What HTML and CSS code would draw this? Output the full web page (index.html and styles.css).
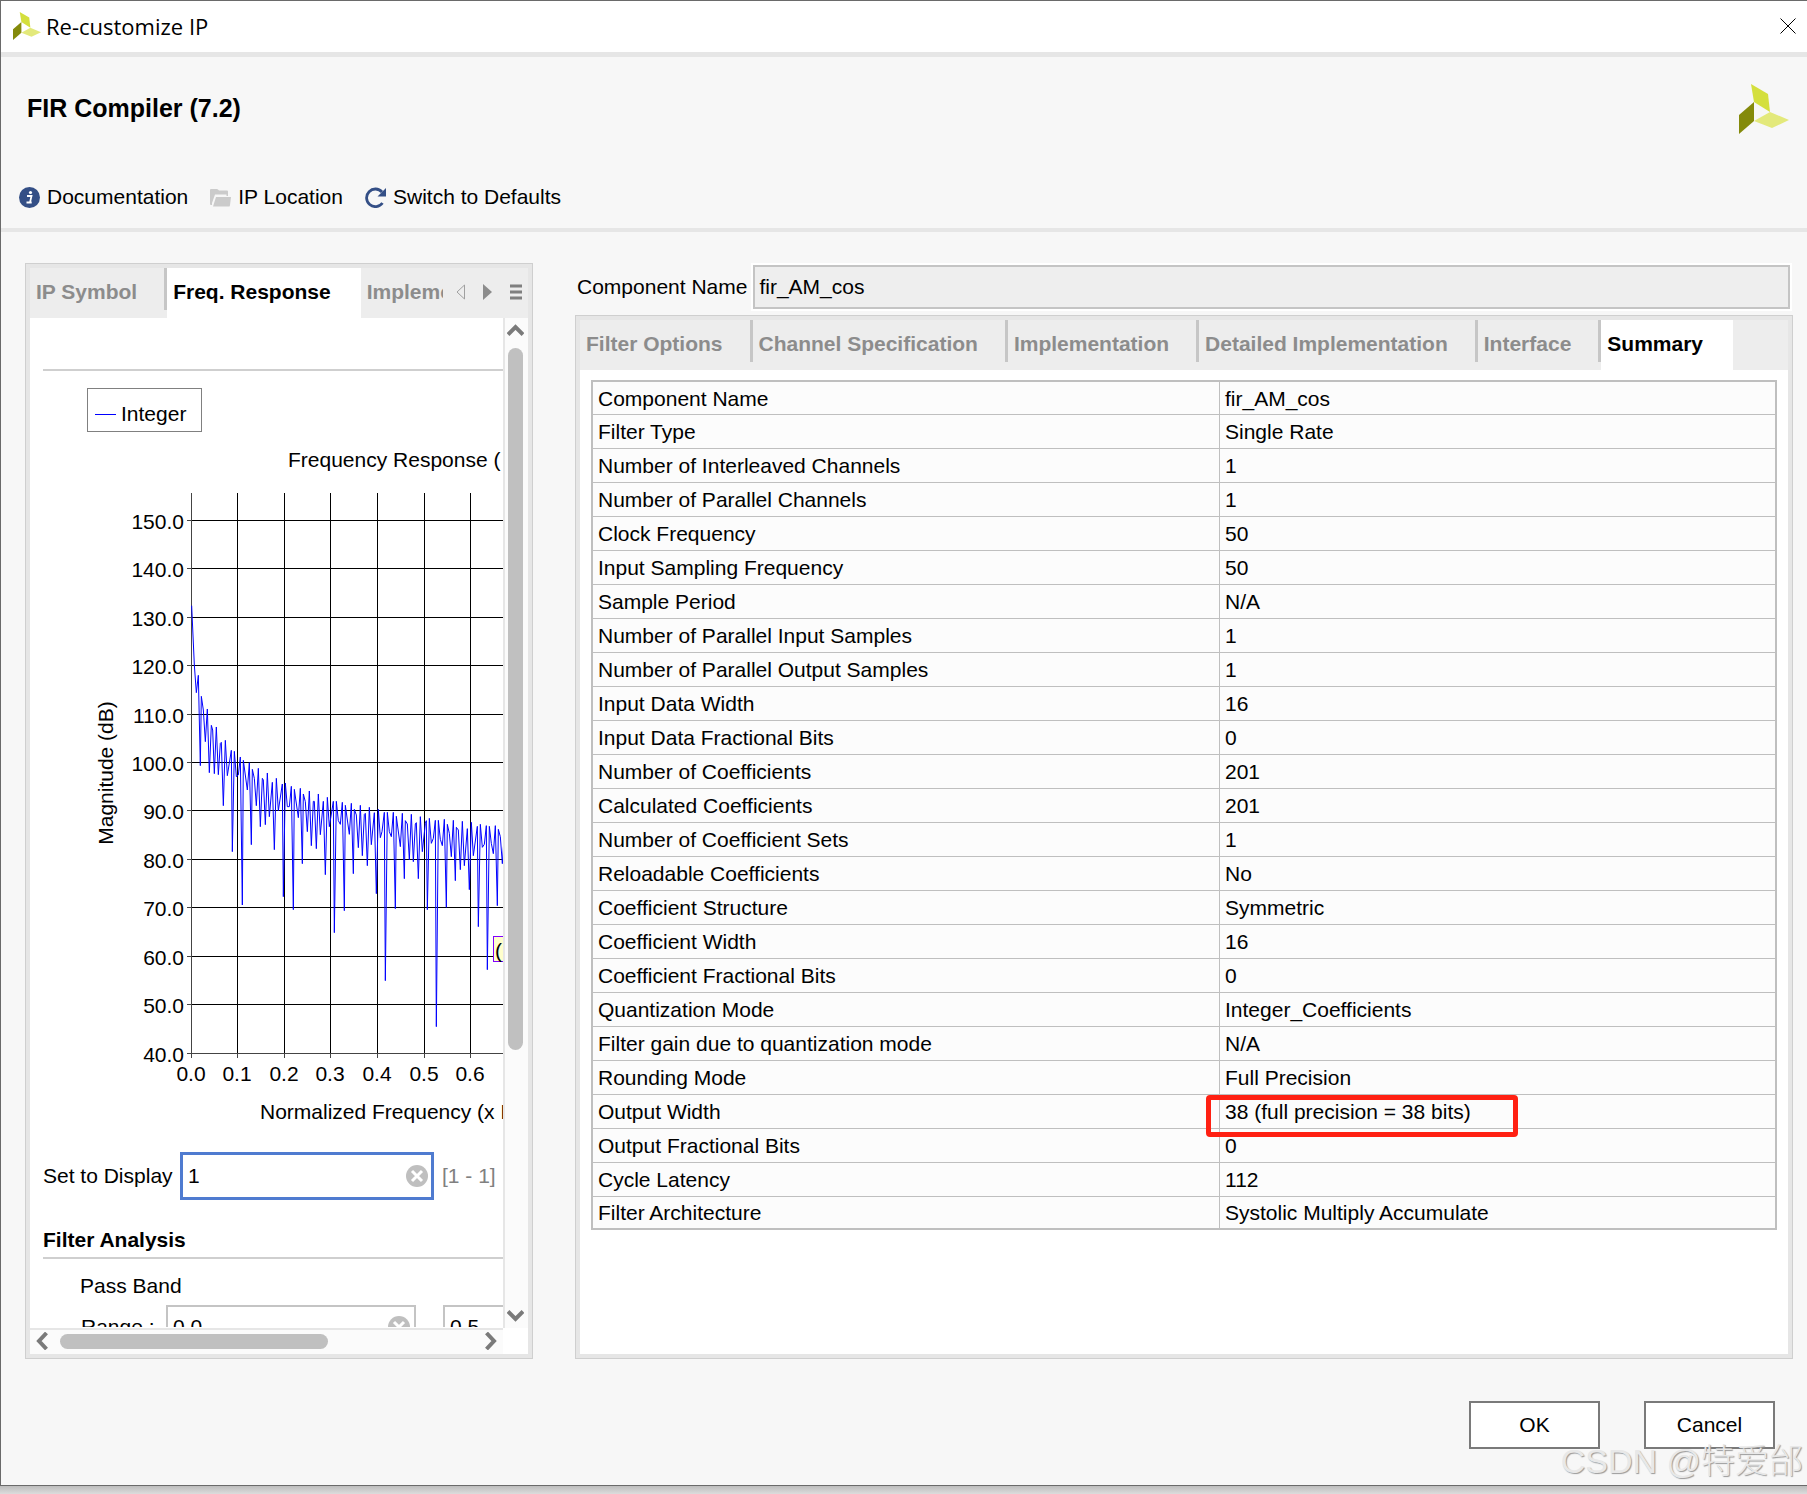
FILE: index.html
```
<!DOCTYPE html>
<html lang="en">
<head>
    <meta charset="UTF-8">
    <meta name="viewport" content="width=device-width, initial-scale=1.0">
    <title>Re-customize IP</title>
    <link rel="stylesheet" href="styles.css">
</head>
<body>
    <div class="dialog">
        <div class="titlebar">
            <svg class="title-logo" viewBox="0 0 50 50">
                <path fill="#d4df3d" d="M12 0 29 10 31 28 15 18z"/>
                <path fill="#848a0b" d="M0 31 15 18V37L0 50z"/>
                <path fill="#e3e97b" d="M15 37 31 28 50 36 33 44z"/>
            </svg>
            <span class="title-text">Re-customize IP</span>
            <button class="close" aria-label="Close">
                <svg viewBox="0 0 16 16" width="16" height="16"><path d="M0.5 0.5 15.5 15.5M15.5 0.5 0.5 15.5" stroke="#000" fill="none"/></svg>
            </button>
        </div>

        <header class="header">
            <div class="header-top">
                <h1>FIR Compiler (7.2)</h1>
                <svg class="logo" viewBox="0 0 50 50">
                    <path fill="#d4df3d" d="M12 0 29 10 31 28 15 18z"/>
                    <path fill="#848a0b" d="M0 31 15 18V37L0 50z"/>
                    <path fill="#e3e97b" d="M15 37 31 28 50 36 33 44z"/>
                </svg>
            </div>
            <div class="toolbar">
                <button class="tool">
                    <svg viewBox="0 0 21 21">
                        <circle cx="10.5" cy="10.5" r="10.5" fill="#344f86"/>
                        <circle cx="11.5" cy="5.5" r="1.6" fill="#fff"/>
                        <path d="M8 9h4.500l-1.500 6.500h1.700M7.500 15.500h4" stroke="#fff" stroke-width="1.800" fill="none"/>
                    </svg>
                    Documentation
                </button>
                <button class="tool">
                    <svg viewBox="0 0 21 21">
                        <path fill="#cbcbcb" d="M0 3q0-1 1-1h6q1 0 2 1.500h8q1 0 1 1V9h-1.500V7.500H5L2 16v2H1q-1 0-1-1z"/>
                        <path fill="#cbcbcb" d="M6 10h15l-1 8q0 1.500-1 1.500H3z"/>
                    </svg>
                    IP Location
                </button>
                <button class="tool">
                    <svg viewBox="0 0 21 21">
                        <path d="M17 5A8.800 8.800 0 1 0 17.500 16" stroke="#344f86" stroke-width="2.800" fill="none"/>
                        <path fill="#344f86" d="M21 1v8.500h-8.500z"/>
                    </svg>
                    Switch to Defaults
                </button>
            </div>
        </header>

        <main class="main">
            <section class="panel preview">
                <div class="tabs" role="tablist">
                    <button class="tab" role="tab">IP Symbol</button>
                    <button class="tab active" role="tab" aria-selected="true">Freq. Response</button>
                    <button class="tab tab-clipped" role="tab">Implementation Details</button>
                    <div class="tab-nav">
                        <button aria-label="Previous tab"><svg width="9" height="16" viewBox="0 0 9 16"><path d="M8.500 1v14L1 8z" fill="none" stroke="#a0a0a0"/></svg></button>
                        <button aria-label="Next tab"><svg width="9" height="16" viewBox="0 0 9 16"><path d="M0 0v16L9 8z" fill="#8c8c8c"/></svg></button>
                        <button aria-label="Tab list"><svg width="12" height="16" viewBox="0 0 12 16"><path d="M0 2h12M0 8h12M0 14h12" stroke="#7f7f7f" stroke-width="3"/></svg></button>
                    </div>
                </div>
                <div class="scroll-area">
                    <div class="viewport">
                        <div class="rule"></div>
                        <!-- Frequency response plot -->
                        <svg class="chart" viewBox="30 371 473 763" width="473" height="763">
                            <rect x="87.500" y="388.500" width="114" height="43" fill="#fff" stroke="#808080"/>
                            <path d="M95 414.500h21" stroke="#00f"/>
                            <text x="121" y="421">Integer</text>
                            <text x="288" y="467">Frequency Response (</text>
                            <path class="grid" d="M237.500 493v561M284.500 493v561M330.500 493v561M377.500 493v561M424.500 493v561M470.500 493v561M191 520.500h330M191 568.500h330M191 617.500h330M191 665.500h330M191 714.500h330M191 762.500h330M191 810.500h330M191 859.500h330M191 907.500h330M191 956.500h330M191 1004.500h330"/>
                            <path class="axis" d="M191.500 493v565M187 1053.500h330M187 520.500h4M187 568.500h4M187 617.500h4M187 665.500h4M187 714.500h4M187 762.500h4M187 810.500h4M187 859.500h4M187 907.500h4M187 956.500h4M187 1004.500h4M237.500 1054v4M284.500 1054v4M330.500 1054v4M377.500 1054v4M424.500 1054v4M470.500 1054v4"/>
                            <g text-anchor="end">
                                <text x="184" y="529">150.0</text>
                                <text x="184" y="577">140.0</text>
                                <text x="184" y="626">130.0</text>
                                <text x="184" y="674">120.0</text>
                                <text x="184" y="723">110.0</text>
                                <text x="184" y="771">100.0</text>
                                <text x="184" y="819">90.0</text>
                                <text x="184" y="868">80.0</text>
                                <text x="184" y="916">70.0</text>
                                <text x="184" y="965">60.0</text>
                                <text x="184" y="1013">50.0</text>
                                <text x="184" y="1062">40.0</text>
                            </g>
                            <g text-anchor="middle">
                                <text x="191" y="1081">0.0</text>
                                <text x="237" y="1081">0.1</text>
                                <text x="284" y="1081">0.2</text>
                                <text x="330" y="1081">0.3</text>
                                <text x="377" y="1081">0.4</text>
                                <text x="424" y="1081">0.5</text>
                                <text x="470" y="1081">0.6</text>
                                <text transform="rotate(-90 113 773)" x="113" y="773">Magnitude (dB)</text>
                            </g>
                            <text x="260" y="1119">Normalized Frequency (x PI rad/sample)</text>
                            <polyline class="response" transform="translate(80 470) scale(0.333333)" points="335,407 343,585 349,668 355,616 361,887 364,679 370,720 376,815 382,717 388,908 394,766 398,780 403,911 409,771 415,914 421,820 424,817 430,1007 436,811 442,917 454,841 457,1145 463,844 469,920 475,915 481,861 487,1305 490,871 502,960 508,878 514,1124 517,898 523,925 529,1007 535,895 541,1070 547,925 550,930 556,1064 562,909 568,1040 577,937 583,1139 589,925 595,1022 607,942 610,1280 616,939 622,1010 628,1010 634,949 640,1319 643,958 655,1043 661,955 667,1181 670,972 676,995 682,1085 688,963 694,1127 700,994 703,994 709,1136 715,972 721,1094 730,994 736,1214 742,982 748,1070 760,994 763,1388 769,994 775,1052 781,1063 787,997 793,1322 796,1006 808,1093 814,1000 820,1211 823,1018 829,1035 835,1133 841,1006 847,1157 853,1033 856,1030 862,1187 868,1012 874,1124 883,1028 889,1271 895,1018 901,1103 906,1085 913,1027 916,1532 922,1027 928,1085 934,1100 940,1027 946,1316 949,1039 961,1130 967,1030 973,1226 976,1052 982,1062 988,1169 994,1033 1000,1175 1006,1062 1009,1058 1015,1226 1021,1040 1027,1145 1036,1060 1039,1052 1042,1319 1048,1045 1054,1120 1060,1105 1066,1051 1069,1670 1075,1051 1081,1108 1087,1127 1093,1048 1099,1312 1102,1063 1108,1090 1114,1160 1120,1051 1126,1232 1129,1072 1135,1080 1141,1199 1147,1054 1153,1187 1162,1076 1168,1259 1174,1057 1180,1157 1192,1069 1195,1370 1201,1063 1207,1132 1213,1123 1219,1067 1222,1499 1228,1069 1234,1120 1240,1151 1246,1067 1252,1307 1255,1078 1261,1100 1267,1181 1275,1060"/>
                            <rect x="493.500" y="936.500" width="60" height="25" fill="#ffc" stroke="#8000ff"/>
                            <text x="495" y="958">(</text>
                        </svg>
                        <div class="set-row">
                            <label for="set-display">Set to Display</label>
                            <div class="field focused">
                                <input id="set-display" type="text" value="1">
                                <button class="clear" aria-label="Clear"><svg viewBox="0 0 22 22"><circle cx="11" cy="11" r="11" fill="#bfbfbf"/><path d="M6 6 16 16M16 6 6 16" stroke="#fff" stroke-width="3"/></svg></button>
                            </div>
                            <span class="hint">[1 - 1]</span>
                        </div>
                        <h2>Filter Analysis</h2>
                        <div class="band-title">Pass Band</div>
                        <div class="range-row">
                            <label for="range-from">Range :</label>
                            <div class="field">
                                <input id="range-from" type="text" value="0.0">
                                <button class="clear" aria-label="Clear"><svg viewBox="0 0 22 22"><circle cx="11" cy="11" r="11" fill="#bfbfbf"/><path d="M6 6 16 16M16 6 6 16" stroke="#fff" stroke-width="3"/></svg></button>
                            </div>
                            <div class="field">
                                <input type="text" value="0.5" aria-label="Range end">
                            </div>
                        </div>
                    </div>
                    <div class="vbar">
                        <svg width="17" height="12" viewBox="0 0 17 12"><path d="M1 10.500 8.500 3 16 10.500" stroke="#7a7a7a" stroke-width="4" fill="none"/></svg>
                        <div class="vthumb"></div>
                        <svg width="17" height="12" viewBox="0 0 17 12"><path d="M1 1.500 8.500 9 16 1.500" stroke="#7a7a7a" stroke-width="4" fill="none"/></svg>
                    </div>
                    <div class="hbar">
                        <svg width="12" height="18" viewBox="0 0 12 18"><path d="M10.500 1 3 9 10.500 17" stroke="#7a7a7a" stroke-width="4" fill="none"/></svg>
                        <div class="hthumb"></div>
                        <svg width="12" height="18" viewBox="0 0 12 18"><path d="M1.500 1 9 9 1.500 17" stroke="#7a7a7a" stroke-width="4" fill="none"/></svg>
                    </div>
                </div>
            </section>

            <section class="config">
                <div class="name-row">
                    <label for="component-name">Component Name</label>
                    <input id="component-name" type="text" value="fir_AM_cos" readonly>
                </div>
                <div class="panel summary">
                    <div class="tabs" role="tablist">
                        <button class="tab" role="tab">Filter Options</button>
                        <button class="tab" role="tab">Channel Specification</button>
                        <button class="tab" role="tab">Implementation</button>
                        <button class="tab" role="tab">Detailed Implementation</button>
                        <button class="tab" role="tab">Interface</button>
                        <button class="tab active" role="tab" aria-selected="true">Summary</button>
                    </div>
                    <div class="summary-body">
                        <table>
                            <tr><td>Component Name</td><td>fir_AM_cos</td></tr>
                            <tr><td>Filter Type</td><td>Single Rate</td></tr>
                            <tr><td>Number of Interleaved Channels</td><td>1</td></tr>
                            <tr><td>Number of Parallel Channels</td><td>1</td></tr>
                            <tr><td>Clock Frequency</td><td>50</td></tr>
                            <tr><td>Input Sampling Frequency</td><td>50</td></tr>
                            <tr><td>Sample Period</td><td>N/A</td></tr>
                            <tr><td>Number of Parallel Input Samples</td><td>1</td></tr>
                            <tr><td>Number of Parallel Output Samples</td><td>1</td></tr>
                            <tr><td>Input Data Width</td><td>16</td></tr>
                            <tr><td>Input Data Fractional Bits</td><td>0</td></tr>
                            <tr><td>Number of Coefficients</td><td>201</td></tr>
                            <tr><td>Calculated Coefficients</td><td>201</td></tr>
                            <tr><td>Number of Coefficient Sets</td><td>1</td></tr>
                            <tr><td>Reloadable Coefficients</td><td>No</td></tr>
                            <tr><td>Coefficient Structure</td><td>Symmetric</td></tr>
                            <tr><td>Coefficient Width</td><td>16</td></tr>
                            <tr><td>Coefficient Fractional Bits</td><td>0</td></tr>
                            <tr><td>Quantization Mode</td><td>Integer_Coefficients</td></tr>
                            <tr><td>Filter gain due to quantization mode</td><td>N/A</td></tr>
                            <tr><td>Rounding Mode</td><td>Full Precision</td></tr>
                            <tr><td>Output Width</td><td class="marked">38 (full precision = 38 bits)</td></tr>
                            <tr><td>Output Fractional Bits</td><td>0</td></tr>
                            <tr><td>Cycle Latency</td><td>112</td></tr>
                            <tr><td>Filter Architecture</td><td>Systolic Multiply Accumulate</td></tr>
                        </table>
                    </div>
                </div>
            </section>
        </main>

        <footer class="footer">
            <button class="btn">OK</button>
            <button class="btn">Cancel</button>
        </footer>
    </div>
    <div class="watermark">CSDN @特爱邰</div>
</body>
</html>
```
FILE: styles.css
```
*, *::before, *::after {
    box-sizing: border-box;
}
body {
    margin: 0;
    min-height: 100vh;
    padding-bottom: 8px;
    display: flex;
    background: linear-gradient(to top, #dcdcdc, #bdbdbd 8px);
    font-family: "Liberation Sans", Arial, sans-serif;
    font-size: 21px;
    line-height: 24px;
    color: #000;
}
button, input {
    font: inherit;
    color: inherit;
}
button {
    border: none;
    background: none;
    padding: 0;
    cursor: pointer;
}
svg {
    display: block;
}
.dialog {
    flex: 1;
    min-width: 0;
    display: flex;
    flex-direction: column;
    background: #f7f7f7;
    border: 1px solid #6a6a6a;
    border-right: none;
}

/* title bar */
.titlebar {
    display: flex;
    align-items: center;
    height: 56px;
    padding: 0 11px 1px 12px;
    background: #fff;
    border-bottom: 5px solid #e6e6e6;
}
.title-logo {
    width: 28px;
    height: 28px;
}
.title-text {
    flex: 1;
    margin-left: 5px;
    font-family: "Open Sans", "Noto Sans", sans-serif;
    font-size: 22px;
}

/* header */
.header {
    height: 175px;
    border-bottom: 4px solid #e6e6e6;
}
.header-top {
    display: flex;
    justify-content: space-between;
    padding: 27px 18px 0 26px;
}
h1 {
    margin: 10px 0 0;
    font-size: 25px;
    line-height: 28px;
}
.logo {
    width: 50px;
    height: 50px;
}
.toolbar {
    display: flex;
    gap: 22px;
    padding: 51px 18px 0;
}
.tool {
    display: flex;
    align-items: center;
    gap: 7px;
}
.tool svg {
    width: 21px;
    height: 21px;
}

/* panels */
.main {
    flex: 1;
    display: flex;
    gap: 42px;
    padding: 31px 14px 0 24px;
}
.panel {
    display: flex;
    flex-direction: column;
    border: 1px solid #cfcfcf;
    background: #fff;
    box-shadow: inset 0 0 0 4px #e6e6e6;
    padding: 4px;
}
.preview {
    width: 508px;
    flex: none;
}
.config {
    flex: 1;
    min-width: 0;
    display: flex;
    flex-direction: column;
}
.summary {
    flex: 1;
}
.tabs {
    display: flex;
    height: 50px;
    flex: none;
    background: #ededed;
}
.tab {
    position: relative;
    padding: 0 30px 2px 6px;
    font-weight: bold;
    color: #8c8c8c;
    text-align: left;
    white-space: nowrap;
}
.tab:not(.active):not(.tab-clipped)::after {
    content: "";
    position: absolute;
    top: 0;
    right: 0;
    width: 3px;
    height: 42px;
    background: #c6c6c6;
}
.tab.active {
    background: #fff;
    color: #000;
}
.tab.tab-clipped {
    flex: 1;
    min-width: 0;
    padding-right: 0;
    overflow: hidden;
}
.tab-nav {
    display: flex;
    align-items: center;
    gap: 18px;
    padding: 0 6px 2px 13px;
}

/* scrolled area */
.scroll-area {
    flex: 1;
    display: grid;
    grid-template-columns: 1fr 25px;
    grid-template-rows: 1fr 26px;
}
.viewport {
    min-width: 0;
    height: 1009px;
    overflow: hidden;
    padding-top: 51px;
}
.rule {
    height: 2px;
    margin-left: 13px;
    background: #cfcfcf;
}
.chart {
    overflow: hidden;
}
.chart .grid {
    stroke: #000;
}
.chart .axis {
    stroke: #444;
}
.response {
    fill: none;
    stroke: #00f;
    stroke-width: 3;
}
.set-row {
    display: flex;
    align-items: center;
    margin-top: 18px;
    padding-left: 13px;
    white-space: nowrap;
}
.set-row label {
    width: 137px;
}
.field {
    position: relative;
    width: 250px;
    height: 44px;
    flex: none;
}
.field input {
    width: 100%;
    height: 100%;
    padding: 0 5px;
    border: 2px solid #c4c4c4;
    background: #fff;
    outline: none;
}
.field.focused {
    width: 254px;
    height: 48px;
}
.field.focused input {
    border: 3px solid #4f7bd0;
}
.clear {
    position: absolute;
    top: 50%;
    right: 6px;
    width: 22px;
    height: 22px;
    margin-top: -11px;
}
.hint {
    margin-left: 8px;
    color: #808080;
}
h2 {
    margin: 26px 0 0 13px;
    padding-bottom: 3px;
    border-bottom: 2px solid #cfcfcf;
    font-size: 21px;
    line-height: 28px;
}
.band-title {
    padding: 13px 0 5px 50px;
    line-height: 28px;
}
.range-row {
    display: flex;
    align-items: center;
    padding-left: 51px;
}
.range-row label {
    width: 85px;
    flex: none;
}
.range-row .field + .field {
    margin-left: 27px;
}
.vbar {
    display: flex;
    flex-direction: column;
    align-items: center;
    gap: 12px;
    padding: 6px 3px 6px 0;
    border-left: 2px solid #e6e6e6;
    background: #fbfbfb;
}
.vthumb {
    flex: 1;
    width: 15px;
    margin-bottom: 248px;
    border-radius: 8px;
    background: #c0c0c0;
}
.hbar {
    display: flex;
    align-items: center;
    gap: 12px;
    padding: 0 6px 2px;
    border-top: 2px solid #e6e6e6;
    background: #fbfbfb;
}
.hthumb {
    width: 268px;
    height: 15px;
    margin-right: auto;
    border-radius: 8px;
    background: #c0c0c0;
}

/* component name and summary table */
.name-row {
    display: flex;
    align-items: center;
    gap: 6px;
    padding: 2px 3px 6px 2px;
}
.name-row input {
    flex: 1;
    height: 44px;
    padding: 0 4px;
    border: 2px solid #c4c4c4;
    background: #eee;
    box-shadow: 0 0 0 2px #fff;
    outline: none;
}
.summary-body {
    padding: 10px 11px;
}
table {
    width: 100%;
    table-layout: fixed;
    border-collapse: collapse;
    border: 2px solid #bfbfbf;
    background: #fcfcfc;
}
td {
    height: 34px;
    padding: 2px 0 0 5px;
    border: 1px solid #bfbfbf;
}
tr:first-child td, tr:last-child td {
    height: 33px;
}
td:first-child {
    width: 53%;
}
/* red highlight drawn over the cell edges */
.marked {
    position: relative;
}
.marked::after {
    content: "";
    position: absolute;
    top: 0;
    left: -14px;
    width: 312px;
    height: 42px;
    border: 5px solid #ff2012;
    border-radius: 4px;
}

/* footer */
.footer {
    display: flex;
    justify-content: flex-end;
    gap: 44px;
    padding: 42px 32px 36px;
}
.btn {
    width: 131px;
    height: 48px;
    border: 2px solid #7a7a7a;
    background: #fff;
}
.watermark {
    position: absolute;
    right: 4px;
    bottom: 9px;
    font-family: "Liberation Sans", "Noto Sans CJK SC", sans-serif;
    font-size: 34px;
    font-weight: 300;
    line-height: 48px;
    color: #e8e8e8;
    text-shadow: 1px 1px 1px #999;
}
```
